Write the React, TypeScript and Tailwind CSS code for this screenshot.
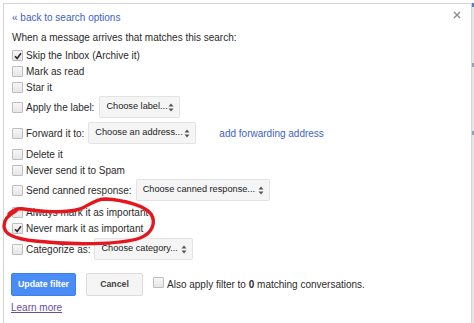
import React from "react";

function Box({ checked = false }: { checked?: boolean }) {
  return (
    <span className="relative inline-block w-[11px] h-[11px] shrink-0 rounded-[1px] border border-[#bdbdbd] bg-gradient-to-b from-[#f7f7f7] to-[#e6e6e6]">
      {checked && (
        <svg className="absolute left-[1px] top-[1px]" width="8" height="8" viewBox="0 0 8 8">
          <path d="M1 4.2 L3.1 6.4 L7 1.2" fill="none" stroke="#2b2b2b" strokeWidth="1.6" />
        </svg>
      )}
    </span>
  );
}

function Arrows() {
  return (
    <svg width="6" height="9" viewBox="0 0 6 9" className="shrink-0">
      <path d="M0.5 3.6 L3 0.6 L5.5 3.6 Z" fill="#555" />
      <path d="M0.5 5.4 L3 8.4 L5.5 5.4 Z" fill="#555" />
    </svg>
  );
}

function Select({ label, w }: { label: string; w: string }) {
  return (
    <div
      className={`${w} h-[22px] flex items-center justify-between pl-[6px] pr-[5px] rounded-[2px] border border-[#e3e3e3] bg-[#f5f5f5] text-[9.2px] text-[#222]`}
    >
      <span>{label}</span>
      <Arrows />
    </div>
  );
}

function Row({
  text,
  checked,
  cls = "h-[16px]",
  children,
}: {
  text: string;
  checked?: boolean;
  cls?: string;
  children?: React.ReactNode;
}) {
  return (
    <div className={`flex items-center ${cls}`}>
      <Box checked={checked} />
      <span className="ml-[3px]">{text}</span>
      {children}
    </div>
  );
}

export default function App() {
  return (
    <div className="relative w-[474px] h-[323px] overflow-hidden bg-white font-['Liberation_Sans',Arial,sans-serif] text-[10px] text-[#2a2a2a]">
      <div className="flex h-full pt-[3px] pl-[3px]">
        <div className="w-[469px] h-[330px] border-l border-t border-r border-[#d4d4d4] pl-[8px] pr-[8px] pt-[5px]">
          <div className="flex items-center justify-between h-[16px]">
            <span className="text-[#3d62c6]">« back to search options</span>
            <svg width="8" height="8" viewBox="0 0 8 8" className="mr-[2px] -mt-[4px]">
              <path d="M1 1 L7 7 M7 1 L1 7" stroke="#8a8a8a" strokeWidth="1.4" />
            </svg>
          </div>
          <div className="mt-[4px] h-[16px] flex items-center">
            When a message arrives that matches this search:
          </div>
          <div className="mt-[2px]">
            <Row text="Skip the Inbox (Archive it)" checked />
            <Row text="Mark as read" />
            <Row text="Star it" />
          </div>
          <div className="mt-[1px]">
            <Row text="Apply the label:" cls="h-[22px]">
              <div className="ml-[5px]">
                <Select label="Choose label..." w="w-[81px]" />
              </div>
            </Row>
          </div>
          <div className="mt-[4px]">
            <Row text="Forward it to:" cls="h-[22px]">
              <div className="ml-[4px]">
                <Select label="Choose an address..." w="w-[108px]" />
              </div>
              <span className="ml-[23px] text-[#3d62c6]">add forwarding address</span>
            </Row>
          </div>
          <div className="mt-[2px]">
            <Row text="Delete it" />
            <Row text="Never send it to Spam" cls="h-[17px]" />
          </div>
          <div>
            <Row text="Send canned response:" cls="h-[22px]">
              <div className="ml-[4px]">
                <Select label="Choose canned response..." w="w-[134px]" />
              </div>
            </Row>
          </div>
          <div className="mt-[3px]">
            <Row text="Always mark it as important" />
            <Row text="Never mark it as important" checked />
          </div>
          <div className="mt-[2px]">
            <Row text="Categorize as:" cls="h-[22px]">
              <div className="ml-[4px]">
                <Select label="Choose category..." w="w-[99px]" />
              </div>
            </Row>
          </div>
          <div className="mt-[13px] flex items-center h-[23px]">
            <div className="-ml-[1px] w-[65px] h-[23px] flex items-center justify-center rounded-[2px] border border-[#3b82f0] bg-[#4a8cf6] text-white font-bold text-[8.75px]">
              Update filter
            </div>
            <div className="ml-[10px] w-[57px] h-[23px] flex items-center justify-center rounded-[2px] border border-[#dcdcdc] bg-[#f5f5f5] text-[#444] font-bold text-[8.75px]">
              Cancel
            </div>
            <div className="ml-[10px] -mt-[4px] flex items-center">
              <Box />
              <span className="ml-[3px] mt-[3px]">
                Also apply filter to <b>0</b> matching conversations.
              </span>
            </div>
          </div>
          <div className="mt-[4px] h-[14px] flex items-center">
            <span className="-ml-[1px] underline text-[#6a4c9c]">Learn more</span>
          </div>
        </div>
        <div className="relative w-[2px] h-full bg-[#e6e6e6]">
          <div className="absolute top-0 left-0 w-[2px] h-[4px] bg-[#4a7fd6]" />
          <div className="absolute top-[60px] left-0 w-[2px] h-[4px] bg-[#8fa3c0]" />
          <div className="absolute top-[128px] left-0 w-[2px] h-[4px] bg-[#8fa3c0]" />
        </div>
      </div>
      <svg className="absolute left-0 top-0 pointer-events-none" width="474" height="323" viewBox="0 0 474 323">
        <path
          d="M9 214 C 13 210, 17 208, 24 209 C 40 211, 62 214, 80 209 C 90 205, 95 199, 105 199 C 125 200, 145 206, 151 214 C 156 222, 153 233, 140 238 C 120 245, 70 245, 35 241 C 15 239, 4 234, 4 226 C 4 220, 8 215, 16 211"
          fill="none"
          stroke="#e3171d"
          strokeWidth="3.4"
          strokeLinecap="round"
        />
      </svg>
    </div>
  );
}
